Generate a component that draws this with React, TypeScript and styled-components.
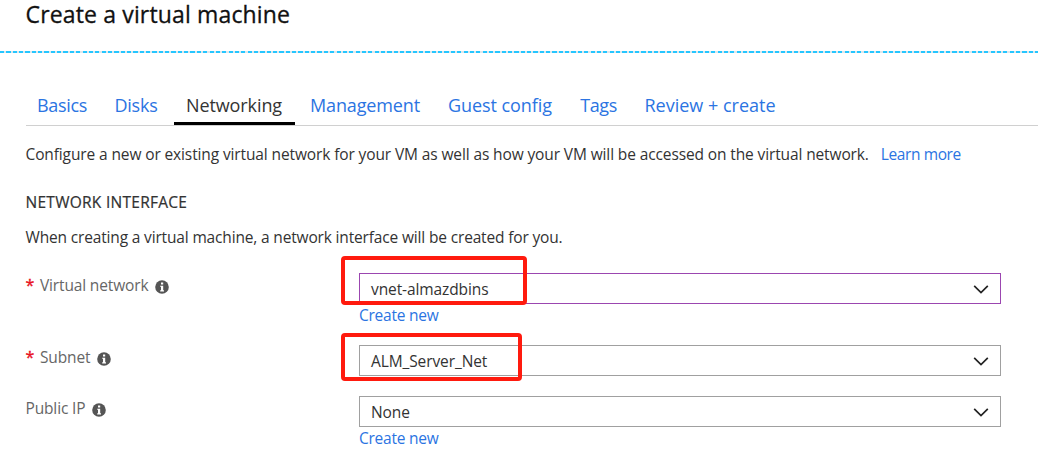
import React from "react";
import styled, { createGlobalStyle } from "styled-components";

const GlobalStyle = createGlobalStyle`
  * { box-sizing: border-box; }
  body {
    margin: 0;
    background: #fff;
    color: #333;
    font-family: "Segoe UI", "Open Sans", "Noto Sans", sans-serif;
    font-size: 15.5px;
    overflow: hidden;
  }
`;

const Page = styled.main`
  width: 1038px;
  height: 461px;
  overflow: hidden;
  background: #fff;
`;

const Header = styled.header`
  height: 53px;
`;

const Title = styled.h1`
  margin: 0;
  padding-left: 25.5px;
  height: 51px;
  font-size: 23px;
  font-weight: 400;
  line-height: 28px;
  letter-spacing: 0.15px;
  color: #111;
  -webkit-text-stroke: 0.3px #111;
`;

const DashedLine = styled.div`
  height: 2px;
  background: repeating-linear-gradient(90deg, #26c6ff 0 4.2px, #dfe6ea 4.2px 6.35px);
`;

const Content = styled.section`
  padding-left: 25.5px;
`;

const TabBar = styled.nav`
  display: flex;
  gap: 4px;
  height: 73px;
  padding-top: 34px;
  border-bottom: 1px solid #d0d0d0;
`;

const Tab = styled.a<{ $active?: boolean; $width: number; $spacing?: number }>`
  flex: none;
  width: ${(p) => p.$width}px;
  height: 38px;
  text-align: center;
  white-space: nowrap;
  font-size: 18px;
  line-height: 37px;
  letter-spacing: ${(p) => p.$spacing ?? 0}px;
  color: ${(p) => (p.$active ? "#333" : "#2b74e2")};
  border-bottom: ${(p) => (p.$active ? "3px solid #000" : "0")};
`;

const Text = styled.p<{ $spacing?: number }>`
  margin: 0;
  height: 35px;
  line-height: 35px;
  white-space: nowrap;
  letter-spacing: ${(p) => p.$spacing ?? 0}px;
`;

const Intro = styled(Text)`
  margin-top: 11px;
`;

const SectionTitle = styled.h2`
  margin: 12px 0 0;
  height: 36px;
  line-height: 37px;
  font-size: 15.5px;
  font-weight: 400;
  letter-spacing: 0.27px;
  -webkit-text-stroke: 0.2px #2b2b2b;
`;

const Link = styled.a<{ $indent?: number }>`
  color: #2b74e2;
  margin-left: ${(p) => p.$indent ?? 0}px;
  letter-spacing: -0.4px;
`;

const Field = styled.div<{ $height: number }>`
  display: flex;
  height: ${(p) => p.$height}px;
`;

const Label = styled.label`
  display: flex;
  align-items: center;
  flex: none;
  width: 333.5px;
  height: 24px;
  color: #666;
  white-space: nowrap;
  letter-spacing: -0.15px;
`;

const Required = styled.span`
  width: 14.5px;
  color: #e81123;
  font-size: 16px;
  -webkit-text-stroke: 0.4px #e81123;
`;

const InfoIcon = styled.svg`
  width: 14px;
  height: 14px;
  margin: 3px 0 0 6.500px;
`;

const Control = styled.div`
  position: relative;
  width: 641.5px;
`;

const Select = styled.div<{ $active?: boolean }>`
  display: flex;
  align-items: center;
  justify-content: space-between;
  height: 31px;
  padding: 0 11px;
  letter-spacing: -0.1px;
  border: 1px solid ${(p) => (p.$active ? "#9b46b0" : "#a0a0a0")};
`;

const Chevron = styled.svg`
  width: 16px;
  height: 10px;
`;

const CreateNew = styled.a`
  display: block;
  height: 22px;
  line-height: 22px;
  color: #2b74e2;
  letter-spacing: -0.25px;
`;

const Highlight = styled.div<{ $top: number; $width: number; $height: number }>`
  position: absolute;
  left: -18px;
  top: ${(p) => p.$top}px;
  width: ${(p) => p.$width}px;
  height: ${(p) => p.$height}px;
  border: 4px solid #ff1a0e;
  border-radius: 4px;
`;

const Info = () => (
  <InfoIcon viewBox="0 0 14 14">
    <circle cx="7" cy="7" r="6.8" fill="#555" />
    <path d="M6 2.500h2.200v2H6zM5.200 5.700h3v4.600h.8v1.100H5.200v-1.100H6V6.800h-.8z" fill="#fff" />
  </InfoIcon>
);

const Arrow = () => (
  <Chevron viewBox="0 0 16 10">
    <path d="M1.200 1.800 8 8.500l6.800-6.700" fill="none" stroke="#222" strokeWidth="1.7" />
  </Chevron>
);

const tabs = [
  { label: "Basics", width: 73, spacing: -0.3 },
  { label: "Disks", width: 67, spacing: -0.2 },
  { label: "Networking", width: 121, active: true, spacing: -0.1 },
  { label: "Management", width: 133, spacing: -0.15 },
  { label: "Guest config", width: 129, spacing: -0.05 },
  { label: "Tags", width: 60, spacing: -0.4 },
  { label: "Review + create", width: 155 },
];

const fields = [
  { label: "Virtual network", value: "vnet-almazdbins", required: true, active: true, link: true, height: 72, mark: { top: -17, width: 186, height: 49 } },
  { label: "Subnet", value: "ALM_Server_Net", required: true, height: 51, mark: { top: -12, width: 181, height: 48 } },
  { label: "Public IP", value: "None", link: true, height: 60 },
];

const Fields = styled.div`
  margin-top: 18px;
`;

export default function App() {
  return (
    <Page>
      <GlobalStyle />
      <Header>
        <Title>Create a virtual machine</Title>
        <DashedLine />
      </Header>
      <Content>
        <TabBar>
          {tabs.map((t) => (
            <Tab key={t.label} $width={t.width} $active={t.active} $spacing={t.spacing}>{t.label}</Tab>
          ))}
        </TabBar>
        <Intro $spacing={-0.12}>
          Configure a new or existing virtual network for your VM as well as how your VM will be accessed on the virtual network.
          <Link $indent={12}>Learn more</Link>
        </Intro>
        <SectionTitle>NETWORK INTERFACE</SectionTitle>
        <Text $spacing={-0.16}>When creating a virtual machine, a network interface will be created for you.</Text>
        <Fields>
          {fields.map((f) => (
            <Field key={f.label} $height={f.height}>
              <Label>
                {f.required && <Required>*</Required>}
                {f.label}
                <Info />
              </Label>
              <Control>
                <Select $active={f.active}>
                  {f.value}
                  <Arrow />
                </Select>
                {f.link && <CreateNew>Create new</CreateNew>}
                {f.mark && <Highlight $top={f.mark.top} $width={f.mark.width} $height={f.mark.height} />}
              </Control>
            </Field>
          ))}
        </Fields>
      </Content>
    </Page>
  );
}
